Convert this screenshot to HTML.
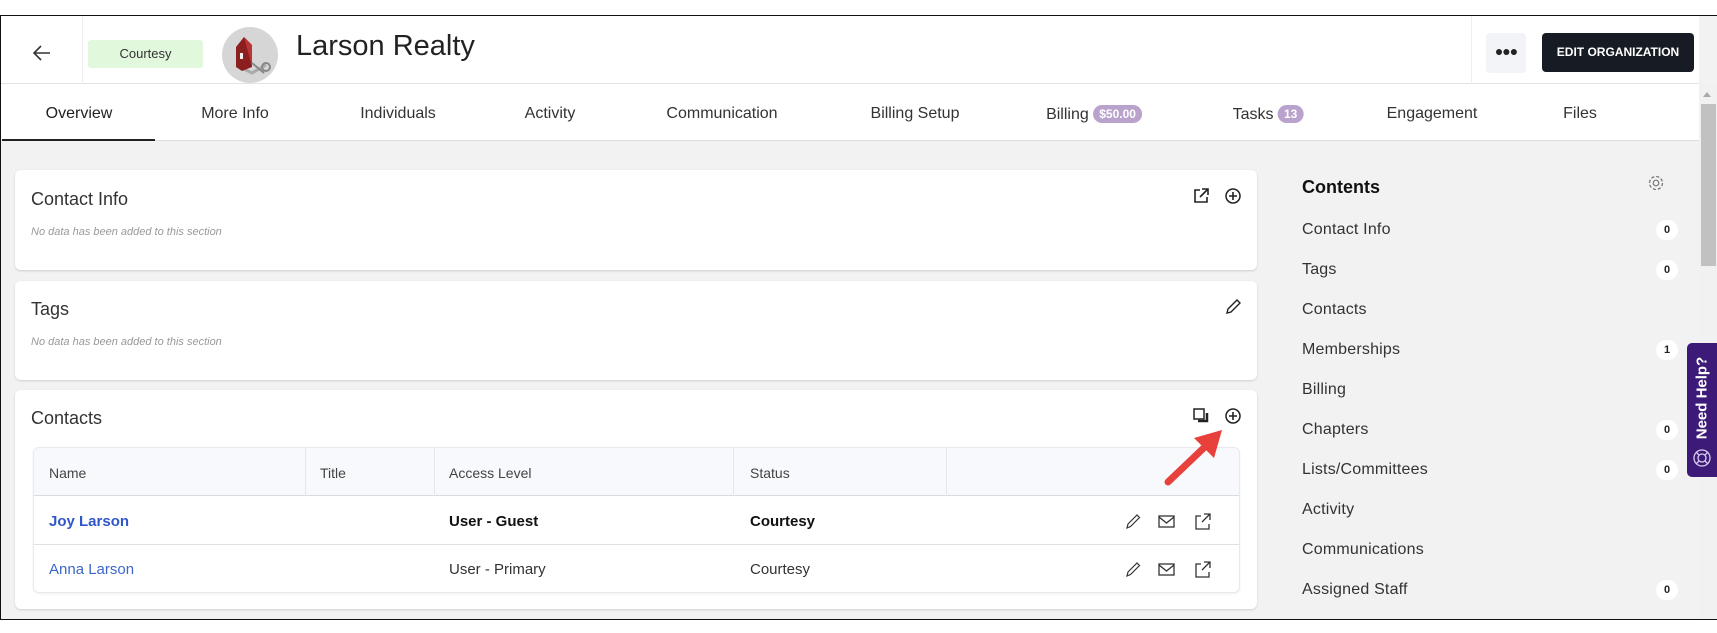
<!DOCTYPE html>
<html><head><meta charset="utf-8"><style>
*{box-sizing:border-box;margin:0;padding:0}
body{width:1717px;height:633px;background:#fff;position:relative;overflow:hidden;font-family:"Liberation Sans",sans-serif;color:#222}
.a{position:absolute}
.frame{left:0;top:15px;width:1717px;height:605px;border:1px solid #111;border-right:none;background:#f2f2f2}
.tab{position:absolute;top:105px;font-size:16px;color:#333;transform:translateX(-50%);white-space:nowrap}
.pill{display:inline-block;background:#b9a3cc;color:#fff;font-weight:bold;font-size:12px;border-radius:9px;padding:2px 6px;vertical-align:1px}
.card{position:absolute;left:15px;width:1242px;background:#fff;border-radius:6px;box-shadow:0 1px 2px rgba(0,0,0,.15)}
.ct{position:absolute;left:16px;font-size:18px;color:#333}
.nd{position:absolute;left:16px;font-size:11px;font-style:italic;color:#999}
.si{position:absolute;left:1302px;font-size:16px;color:#333;letter-spacing:0.2px}
.bd{position:absolute;left:1656px;width:22px;height:20px;border-radius:10px;background:#fff;font-size:11px;font-weight:bold;text-align:center;line-height:20px}
.th{position:absolute;top:17px;font-size:14px;color:#444}
.td{position:absolute;font-size:15px}
</style></head><body>
<div class="a frame"></div>
<div class="a" style="left:1px;top:16px;width:1698px;height:68px;background:#fff;border-bottom:1px solid #e3e3e3"></div>
<div class="a" style="left:82px;top:16px;width:1px;height:68px;background:#eee"></div>
<svg class="a" style="left:32px;top:44px" width="20" height="18" viewBox="0 0 20 18"><path d="M18 9H3M9 2L2 9l7 7" fill="none" stroke="#333" stroke-width="1.6"/></svg>
<div class="a" style="left:88px;top:40px;width:115px;height:28px;background:#e2f8dc;border-radius:3px;font-size:13px;color:#333;text-align:center;line-height:28px">Courtesy</div>
<div class="a" style="left:222px;top:27px;width:56px;height:56px;border-radius:50%;background:#d6d6d6;overflow:hidden">
<svg width="56" height="56" viewBox="0 0 56 56"><path d="M18 40l12 6 14-8" stroke="#aaa" stroke-width="3" fill="none"/><path d="M14 20l8-10 8 8v22l-10 4-6-4z" fill="#8b1f1f"/><path d="M22 10l8 8v22" fill="#b33"/><rect x="18" y="26" width="3" height="6" fill="#eee"/><path d="M30 36l12 10" stroke="#888" stroke-width="2"/><circle cx="44" cy="40" r="4" fill="none" stroke="#888" stroke-width="2"/></svg></div>
<div class="a" style="left:296px;top:30px;font-size:29px;color:#222">Larson Realty</div>
<div class="a" style="left:1471px;top:16px;width:1px;height:68px;background:#eee"></div>
<div class="a" style="left:1486px;top:33px;width:40px;height:40px;background:#f2f4f7;border-radius:4px;text-align:center;line-height:36px;font-size:14px;font-weight:bold;color:#222;letter-spacing:-1px">●●●</div>
<div class="a" style="left:1542px;top:33px;width:152px;height:39px;background:#171c24;border-radius:4px;color:#fff;font-size:12px;font-weight:bold;text-align:center;line-height:39px">EDIT ORGANIZATION</div>
<div class="a" style="left:1px;top:84px;width:1698px;height:57px;background:#fff;border-bottom:1px solid #ddd"></div>
<div class="tab" style="left:79px;color:#222">Overview</div>
<div class="a" style="left:2px;top:139px;width:153px;height:2px;background:#222"></div>
<div class="tab" style="left:235px">More Info</div>
<div class="tab" style="left:398px">Individuals</div>
<div class="tab" style="left:550px">Activity</div>
<div class="tab" style="left:722px">Communication</div>
<div class="tab" style="left:915px">Billing Setup</div>
<div class="tab" style="left:1094px">Billing <span class="pill">$50.00</span></div>
<div class="tab" style="left:1268px">Tasks <span class="pill">13</span></div>
<div class="tab" style="left:1432px">Engagement</div>
<div class="tab" style="left:1580px">Files</div>
<div class="a" style="left:1699px;top:84px;width:18px;height:535px;background:#f1f1f1"></div>
<div class="a" style="left:1703px;top:92px;width:0;height:0;border:4px solid transparent;border-bottom:5px solid #aaa;border-top:none"></div>
<div class="a" style="left:1701px;top:104px;width:15px;height:162px;background:#c1c1c1"></div>
<div class="card" style="top:170px;height:100px">
<div class="ct" style="top:19px">Contact Info</div>
<div class="nd" style="top:56px">No data has been added to this section</div>
<svg class="a" style="left:1177px;top:17px" width="18" height="18" viewBox="0 0 18 18"><path d="M8 3H3v12h12v-5M10 2h6v6M16 2L8 10" fill="none" stroke="#222" stroke-width="1.6"/></svg>
<svg class="a" style="left:1209px;top:17px" width="18" height="18" viewBox="0 0 18 18"><circle cx="9" cy="9" r="7" fill="none" stroke="#222" stroke-width="1.5"/><path d="M9 5v8M5 9h8" stroke="#222" stroke-width="1.6"/></svg>
</div>
<div class="card" style="top:281px;height:99px">
<div class="ct" style="top:18px">Tags</div>
<div class="nd" style="top:55px">No data has been added to this section</div>
<svg class="a" style="left:1209px;top:17px" width="18" height="18" viewBox="0 0 18 18"><path d="M3 15l1-4 9-9 3 3-9 9z" fill="none" stroke="#222" stroke-width="1.4"/></svg>
</div>
<div class="card" style="top:390px;height:219px">
<div class="ct" style="top:18px">Contacts</div>
<svg class="a" style="left:1177px;top:17px" width="18" height="18" viewBox="0 0 18 18"><rect x="2" y="2" width="10" height="10" fill="none" stroke="#222" stroke-width="1.5"/><path d="M6 14h9V6" fill="none" stroke="#222" stroke-width="2.5"/></svg>
<svg class="a" style="left:1209px;top:17px" width="18" height="18" viewBox="0 0 18 18"><circle cx="9" cy="9" r="7" fill="none" stroke="#222" stroke-width="1.5"/><path d="M9 5v8M5 9h8" stroke="#222" stroke-width="1.6"/></svg>
<div class="a" style="left:18px;top:57px;width:1207px;height:146px;border:1px solid #e6e9ee;border-radius:6px;background:#fff;overflow:hidden;box-shadow:0 1px 2px rgba(0,0,0,.06)">
<div class="a" style="left:0;top:0;width:1207px;height:48px;background:#f7f9fc;border-bottom:1px solid #d8dbe0"></div>
<div class="a" style="left:271px;top:0;width:1px;height:48px;background:#e4e7ec"></div>
<div class="a" style="left:400px;top:0;width:1px;height:48px;background:#e4e7ec"></div>
<div class="a" style="left:699px;top:0;width:1px;height:48px;background:#e4e7ec"></div>
<div class="a" style="left:912px;top:0;width:1px;height:48px;background:#e4e7ec"></div>
<div class="th" style="left:15px">Name</div><div class="th" style="left:286px">Title</div><div class="th" style="left:415px">Access Level</div><div class="th" style="left:716px">Status</div>
<div class="a" style="left:0;top:96px;width:1207px;height:1px;background:#e0e0e0"></div>
<div class="td" style="left:15px;top:65px;color:#2f57c9;font-weight:bold">Joy Larson</div>
<div class="td" style="left:415px;top:65px;font-weight:bold;color:#111">User - Guest</div>
<div class="td" style="left:716px;top:65px;font-weight:bold;color:#111">Courtesy</div>
<div class="td" style="left:15px;top:113px;color:#3d66cc">Anna Larson</div>
<div class="td" style="left:415px;top:113px;color:#333">User - Primary</div>
<div class="td" style="left:716px;top:113px;color:#333">Courtesy</div>
<svg class="a" style="left:1090px;top:64px" width="110" height="18" viewBox="0 0 110 18"><path d="M3 16l1-4 9-9 2.5 2.5-9 9z" fill="none" stroke="#333" stroke-width="1.2"/><rect x="35" y="4" width="15" height="11" fill="none" stroke="#333" stroke-width="1.3"/><path d="M35 5l7.5 6L50 5" fill="none" stroke="#333" stroke-width="1.3"/><path d="M77 4h-5v13h13v-5M80 2h6v6M86 2l-8 8" fill="none" stroke="#333" stroke-width="1.3"/></svg>
<svg class="a" style="left:1090px;top:112px" width="110" height="18" viewBox="0 0 110 18"><path d="M3 16l1-4 9-9 2.5 2.5-9 9z" fill="none" stroke="#333" stroke-width="1.2"/><rect x="35" y="4" width="15" height="11" fill="none" stroke="#333" stroke-width="1.3"/><path d="M35 5l7.5 6L50 5" fill="none" stroke="#333" stroke-width="1.3"/><path d="M77 4h-5v13h13v-5M80 2h6v6M86 2l-8 8" fill="none" stroke="#333" stroke-width="1.3"/></svg>
</div>
</div>
<svg class="a" style="left:1150px;top:420px" width="80" height="70" viewBox="0 0 80 70"><path d="M18 62L60 22" stroke="#e8403a" stroke-width="7" stroke-linecap="round"/><path d="M72 10L44 18l20 20z" fill="#e8403a"/></svg>
<div class="a" style="left:1302px;top:177px;font-size:18px;font-weight:bold;color:#111">Contents</div>
<svg class="a" style="left:1646px;top:173px" width="20" height="20" viewBox="0 0 20 20"><circle cx="10" cy="10" r="2.8" fill="none" stroke="#777" stroke-width="1.2"/><circle cx="10" cy="10" r="6.5" fill="none" stroke="#777" stroke-width="1.3" stroke-dasharray="3.2 1.9"/></svg>
<div class="si" style="top:221px">Contact Info</div><div class="bd" style="top:220px">0</div>
<div class="si" style="top:261px">Tags</div><div class="bd" style="top:260px">0</div>
<div class="si" style="top:301px">Contacts</div>
<div class="si" style="top:341px">Memberships</div><div class="bd" style="top:340px">1</div>
<div class="si" style="top:381px">Billing</div>
<div class="si" style="top:421px">Chapters</div><div class="bd" style="top:420px">0</div>
<div class="si" style="top:461px">Lists/Committees</div><div class="bd" style="top:460px">0</div>
<div class="si" style="top:501px">Activity</div>
<div class="si" style="top:541px">Communications</div>
<div class="si" style="top:581px">Assigned Staff</div><div class="bd" style="top:580px">0</div>
<div class="a" style="left:1687px;top:343px;width:30px;height:134px;background:#3d1a78;border-radius:5px 0 0 5px"></div>
<div class="a" style="left:1702px;top:398px;transform:translate(-50%,-50%) rotate(-90deg);color:#fff;font-weight:bold;font-size:15px;white-space:nowrap">Need Help?</div>
<svg class="a" style="left:1692px;top:448px" width="20" height="20" viewBox="0 0 20 20"><circle cx="10" cy="10" r="8" fill="none" stroke="#d9cdf0" stroke-width="1.3"/><circle cx="10" cy="10" r="4" fill="none" stroke="#d9cdf0" stroke-width="1.3"/><path d="M4 4l3 3M16 4l-3 3M4 16l3-3M16 16l-3-3" stroke="#d9cdf0" stroke-width="1.3"/></svg>
</body></html>
